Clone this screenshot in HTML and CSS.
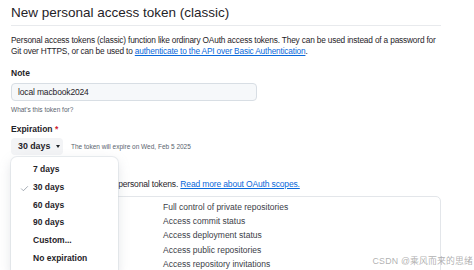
FILE: index.html
```html
<!DOCTYPE html>
<html>
<head>
<meta charset="utf-8">
<link rel="stylesheet" href="styles.css">
</head>
<body>
<div class="page">
  <h1 class="title">New personal access token (classic)</h1>
  <p class="intro">Personal access tokens (classic) function like ordinary OAuth access tokens. They can be used instead of a password for Git over HTTPS, or can be used to <a class="link" href="#">authenticate to the API over Basic Authentication</a>.</p>

  <div class="field">
    <div class="label">Note</div>
    <div class="input">local macbook2024</div>
    <div class="hint">What's this token for?</div>
  </div>

  <div class="field field-exp">
    <div class="label">Expiration <span class="req">*</span></div>
    <div class="exp-row">
      <div class="dd">
        <div class="btn">30 days <span class="caret"></span></div>
        <div class="menu">
          <div class="item">7 days</div>
          <div class="item checked"><svg class="check" viewBox="0 0 16 16" width="9" height="9"><path d="M2.5 8.5 L6 12 L13.5 4.5" fill="none" stroke="#8c959f" stroke-width="1.4" stroke-linecap="round" stroke-linejoin="round"/></svg>30 days</div>
          <div class="item">60 days</div>
          <div class="item">90 days</div>
          <div class="item">Custom...</div>
          <div class="item">No expiration</div>
        </div>
      </div>
      <span class="expnote">The token will expire on Wed, Feb 5 2025</span>
    </div>
  </div>

  <p class="scopes-intro">Scopes define the access for personal tokens. <a class="link" href="#">Read more about OAuth scopes.</a></p>

  <div class="scopes">
    <div class="scope"><span class="sname">repo</span><span class="sdesc">Full control of private repositories</span></div>
    <div class="scope"><span class="sname">repo:status</span><span class="sdesc">Access commit status</span></div>
    <div class="scope"><span class="sname">repo_deployment</span><span class="sdesc">Access deployment status</span></div>
    <div class="scope"><span class="sname">public_repo</span><span class="sdesc">Access public repositories</span></div>
    <div class="scope"><span class="sname">repo:invite</span><span class="sdesc">Access repository invitations</span></div>
  </div>
</div>
<div class="watermark">CSDN @乘风而来的思绪</div>
</body>
</html>
```

FILE: styles.css
```css
html, body {
  margin: 0;
  padding: 0;
  background: #fff;
  overflow: hidden;
}
body {
  width: 474px;
  height: 270px;
  position: relative;
  font-family: "Liberation Sans", Arial, "Noto Sans CJK SC", sans-serif;
  color: #1f2328;
}
.page {
  width: 430px;
  padding: 3px 0 0 11px;
}
.title {
  margin: 0;
  font-weight: 400;
  font-size: 13.5px;
  line-height: 20px;
  padding-bottom: 2px;
  border-bottom: 1px solid #e8eaed;
}
.intro {
  margin: 9px 0 0;
  font-size: 8.3px;
  line-height: 10.5px;
  letter-spacing: -0.17px;
}
.link {
  color: #0969da;
  text-decoration: underline;
  text-underline-offset: 1px;
}
.field {
  margin-top: 11px;
}
.label {
  font-size: 8.5px;
  font-weight: 700;
  line-height: 12px;
}
.req {
  color: #cf222e;
}
.input {
  margin-top: 4px;
  width: 232px;
  height: 16px;
  border: 1px solid #d8dee4;
  border-radius: 4px;
  background: #f6f8fa;
  padding: 0 6px;
  font-size: 8.5px;
  line-height: 16px;
  letter-spacing: -0.15px;
}
.hint {
  margin-top: 4px;
  font-size: 6.5px;
  line-height: 10px;
  color: #59636e;
}
.field-exp {
  margin-top: 8px;
}
.exp-row {
  margin-top: 3px;
  display: flex;
  align-items: center;
  gap: 8px;
}
.dd {
  position: relative;
}
.btn {
  width: 52px;
  height: 17px;
  padding: 0 0 0 7px;
  box-sizing: border-box;
  border-radius: 4px;
  background: #f3f4f6;
  font-size: 8.8px;
  font-weight: 700;
  line-height: 17px;
  display: flex;
  align-items: center;
  gap: 6px;
  white-space: nowrap;
  color: #1f2328;
}
.caret {
  width: 0;
  height: 0;
  border-left: 2.5px solid transparent;
  border-right: 2.5px solid transparent;
  border-top: 3px solid #1f2328;
}
.menu {
  position: absolute;
  left: 0;
  top: 19px;
  width: 107px;
  height: 118px;
  background: #fff;
  border-radius: 6px;
  box-shadow: 0 0 0 1px rgba(208,215,222,0.45), 0 4px 12px rgba(140,149,159,0.25);
  padding-top: 4px;
  box-sizing: border-box;
  z-index: 2;
}
.item {
  position: relative;
  height: 17.8px;
  line-height: 17.8px;
  padding-left: 22px;
  font-size: 8.5px;
  font-weight: 700;
  color: #1f2328;
}
.check {
  position: absolute;
  left: 9px;
  top: 5px;
}
.expnote {
  font-size: 6.5px;
  color: #59636e;
}
.scopes-intro {
  margin: 24px 0 0;
  font-size: 8.5px;
  line-height: 11px;
  letter-spacing: -0.15px;
}
.scopes {
  margin-top: 6px;
  height: 90px;
  border: 1px solid #e3e6ea;
  border-radius: 5px;
  padding-top: 3px;
  box-sizing: border-box;
}
.scope {
  display: flex;
  height: 14.2px;
  align-items: center;
  font-size: 8.5px;
  color: #3b4048;
}
.sname {
  width: 151px;
  padding-left: 20px;
  box-sizing: border-box;
}
.watermark {
  position: absolute;
  right: 1px;
  bottom: 3px;
  font-size: 8.8px;
  color: rgba(150,150,150,0.75);
  letter-spacing: 0.2px;
}
```
